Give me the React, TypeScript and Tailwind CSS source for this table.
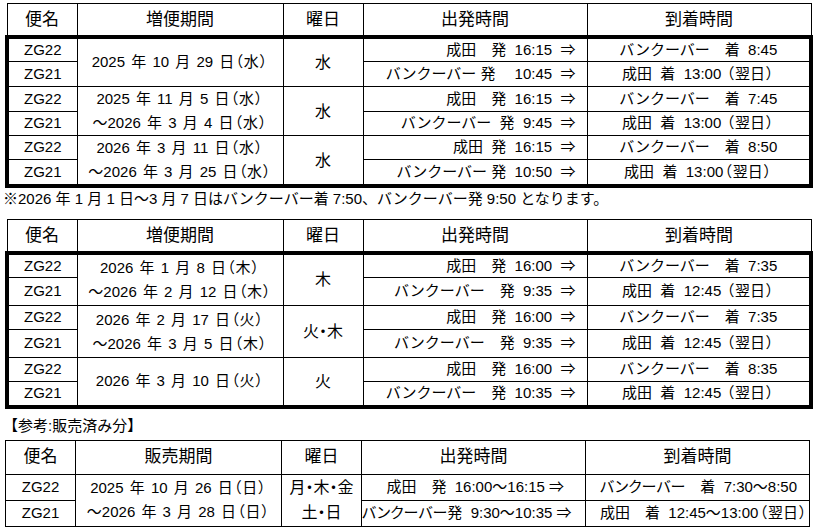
import { Fragment, type ReactNode } from "react";

type Pair = {
  period: string[];
  day: string[];
  dep: [string, string];
  arr: [string, string];
  rows: [string, string];
};

// proportional glyphs for brackets and middle dots, as in the printed notice
function fmt(s: string): ReactNode {
  return s.split(/([（）・])/).map((p, i) =>
    /[（）・]/.test(p) ? (
      <span key={i} className={p === "・" ? "[font-feature-settings:'palt']" : "mx-[1px] [font-feature-settings:'palt']"}>
        {p}
      </span>
    ) : (
      p
    )
  );
}

const WINTER: Pair[] = [
  {
    period: ["2025 年 10 月 29 日（水）"],
    day: ["水"],
    dep: ["成田　発  16:15  ⇒", "バンクーバー 発　 10:45  ⇒"],
    arr: ["バンクーバー　着  8:45", "成田  着  13:00 （翌日）"],
    rows: ["h-[24px]", "h-[25px]"],
  },
  {
    period: ["2025 年 11 月 5 日（水）", "～2026 年 3 月 4 日（水）"],
    day: ["水"],
    dep: ["成田　発  16:15  ⇒", "バンクーバー  発  9:45  ⇒"],
    arr: ["バンクーバー　着  7:45", "成田  着  13:00 （翌日）"],
    rows: ["h-[23px]", "h-[23px]"],
  },
  {
    period: ["2026 年 3 月 11 日（水）", "～2026 年 3 月 25 日（水）"],
    day: ["水"],
    dep: ["成田  発  16:15  ⇒", "バンクーバー 発  10:50  ⇒"],
    arr: ["バンクーバー　着  8:50", "成田  着  13:00（翌日）"],
    rows: ["h-[24px]", "h-[26px]"],
  },
];

const SPRING: Pair[] = [
  {
    period: ["2026 年 1 月 8 日（木）", "～2026 年 2 月 12 日（木）"],
    day: ["木"],
    dep: ["成田　発  16:00  ⇒", "バンクーバー　発  9:35  ⇒"],
    arr: ["バンクーバー　着  7:35", "成田  着  12:45 （翌日）"],
    rows: ["h-[24px]", "h-[28px]"],
  },
  {
    period: ["2026 年 2 月 17 日（火）", "～2026 年 3 月 5 日（木）"],
    day: ["火・木"],
    dep: ["成田　発  16:00  ⇒", "バンクーバー　発  9:35  ⇒"],
    arr: ["バンクーバー　着  7:35", "成田  着  12:45 （翌日）"],
    rows: ["h-[24px]", "h-[28px]"],
  },
  {
    period: ["2026 年 3 月 10 日（火）"],
    day: ["火"],
    dep: ["成田　発  16:00  ⇒", "バンクーバー　発  10:35  ⇒"],
    arr: ["バンクーバー　着  8:35", "成田  着  12:45 （翌日）"],
    rows: ["h-[24px]", "h-[23px]"],
  },
];

const SOLD: Pair[] = [
  {
    period: ["2025 年 10 月 26 日（日）", "～2026 年 3 月 28 日（日）"],
    day: ["月・木・金", "土・日"],
    dep: ["成田　発  16:00～16:15 ⇒", "バンクーバー発  9:30～10:35 ⇒"],
    arr: ["バンクーバー　着  7:30～8:50", "成田　着  12:45～13:00（翌日）"],
    rows: ["h-[26px]", "h-[26px]"],
  },
];

const cell = "border border-black p-0 whitespace-pre";

function Schedule({
  label,
  pairs,
  thick,
  prop,
  headH,
  depPad,
  arrAlign,
}: {
  label: string;
  pairs: Pair[];
  thick?: boolean;
  prop?: boolean;
  headH: string;
  depPad: string;
  arrAlign: string;
}) {
  return (
    <table className="ml-[5px] w-[804px] table-fixed border-collapse">
      <colgroup>
        <col className="w-[70px]" />
        <col className="w-[206px]" />
        <col className="w-[80px]" />
        <col className="w-[224px]" />
        <col className="w-[224px]" />
      </colgroup>
      <thead>
        <tr className={headH}>
          {["便名", label, "曜日", "出発時間", "到着時間"].map((h) => (
            <th key={h} className="border border-black p-0 text-[17px] font-normal">
              {h}
            </th>
          ))}
        </tr>
      </thead>
      <tbody
        className={`${thick ? "border-4 border-black" : ""} ${prop ? "[font-feature-settings:'palt']" : ""}`}
      >
        {pairs.map((p, i) => (
          <Fragment key={i}>
            <tr className={p.rows[0]}>
              <td className={`${cell} text-center`}>ZG22</td>
              <td rowSpan={2} className={`${cell} text-center leading-[24px] [word-spacing:2px]`}>
                {p.period.map((l) => (
                  <div key={l}>{fmt(l)}</div>
                ))}
              </td>
              <td rowSpan={2} className={`${cell} text-center text-[16px] leading-[25px]`}>
                {p.day.map((l) => (
                  <div key={l}>{fmt(l)}</div>
                ))}
              </td>
              <td className={`${cell} text-right ${depPad}`}>{fmt(p.dep[0])}</td>
              <td className={`${cell} ${arrAlign}`}>{fmt(p.arr[0])}</td>
            </tr>
            <tr className={p.rows[1]}>
              <td className={`${cell} text-center`}>ZG21</td>
              <td className={`${cell} text-right ${depPad}`}>{fmt(p.dep[1])}</td>
              <td className={`${cell} ${arrAlign}`}>{fmt(p.arr[1])}</td>
            </tr>
          </Fragment>
        ))}
      </tbody>
    </table>
  );
}

export default function App() {
  return (
    <div className="min-h-screen w-[816px] overflow-hidden bg-white pt-[3px] font-['Liberation_Sans','Noto_Sans_CJK_JP',sans-serif] text-[15px] text-black">
      <Schedule label="増便期間" pairs={WINTER} thick headH="h-[33px]" depPad="pr-[11px]" arrAlign="text-center" />

      <p className="mt-[1px] pl-[3px] leading-[20px] whitespace-pre">
        ※2026 年 1 月 1 日～3 月 7 日はバンクーバー着 7:50、バンクーバー発 9:50 となります。
      </p>

      <div className="mt-[10px]">
        <Schedule label="増便期間" pairs={SPRING} thick headH="h-[33px]" depPad="pr-[11px]" arrAlign="text-center" />
      </div>

      <p className="mt-[7px] pl-[3px] leading-[20px]">【参考:販売済み分】</p>

      <div className="mt-[4px]">
        <Schedule
          label="販売期間"
          pairs={SOLD}
          prop
          headH="h-[34px]"
          depPad="pr-[21px]"
          arrAlign="text-left pl-[14px]"
        />
      </div>
    </div>
  );
}
